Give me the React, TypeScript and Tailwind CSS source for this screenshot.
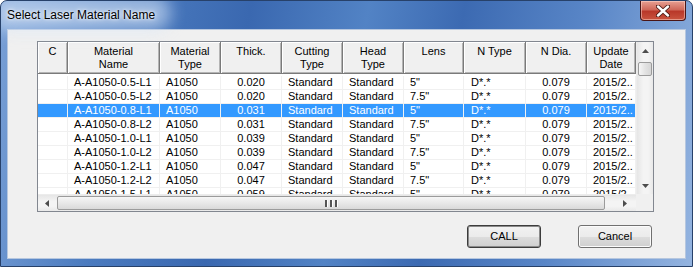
import React from 'react';

type Col = { title: string[]; w: string; body: string };

const cols: Col[] = [
  { title: ['C'], w: 'w-[30px]', body: 'text-left' },
  { title: ['Material', 'Name'], w: 'w-[92px]', body: 'text-left pl-[6px]' },
  { title: ['Material', 'Type'], w: 'w-[61px]', body: 'text-left pl-[6px]' },
  { title: ['Thick.'], w: 'w-[61px]', body: 'text-center' },
  { title: ['Cutting', 'Type'], w: 'w-[61px]', body: 'text-left pl-[6px]' },
  { title: ['Head', 'Type'], w: 'w-[61px]', body: 'text-left pl-[6px]' },
  { title: ['Lens'], w: 'w-[60px]', body: 'text-left pl-[6px]' },
  { title: ['N Type'], w: 'w-[62px]', body: 'text-left pl-[7px]' },
  { title: ['N Dia.'], w: 'w-[61px]', body: 'text-center' },
  { title: ['Update', 'Date'], w: 'w-[49px]', body: 'text-left pl-[6px]' },
];

const data: [string, string, string][] = [
  ['A-A1050-0.5-L1', '0.020', '5"'],
  ['A-A1050-0.5-L2', '0.020', '7.5"'],
  ['A-A1050-0.8-L1', '0.031', '5"'],
  ['A-A1050-0.8-L2', '0.031', '7.5"'],
  ['A-A1050-1.0-L1', '0.039', '5"'],
  ['A-A1050-1.0-L2', '0.039', '7.5"'],
  ['A-A1050-1.2-L1', '0.047', '5"'],
  ['A-A1050-1.2-L2', '0.047', '7.5"'],
  ['A-A1050-1.5-L1', '0.059', '5"'],
];

function Arrow({ dir }: { dir: 'up' | 'down' | 'left' | 'right' }) {
  const pts = {
    up: '0,4 7,4 3.5,0',
    down: '0,0 7,0 3.5,4',
    left: '4,0 4,7 0,3.5',
    right: '0,0 0,7 4,3.5',
  }[dir];
  const vert = dir === 'up' || dir === 'down';
  return (
    <svg width={vert ? 7 : 4} height={vert ? 4 : 7} viewBox={vert ? '0 0 7 4' : '0 0 4 7'}>
      <polygon points={pts} fill="#4d4d4d" />
    </svg>
  );
}

function VScroll() {
  return (
    <div className="w-[17px] h-full flex flex-col bg-[linear-gradient(90deg,#e6e6e6,#f4f4f4_40%,#f4f4f4_70%,#e9e9e9)] border-l border-[#ececec]">
      <div className="h-[17px] flex items-center justify-center">
        <Arrow dir="up" />
      </div>
      <div className="h-[14px] mx-[1px] mt-[3px] rounded-[2px] border border-[#9b9b9b] bg-[linear-gradient(90deg,#f6f6f6,#e3e3e3_50%,#d6d6d6)]" />
      <div className="flex-1" />
      <div className="h-[17px] flex items-center justify-center">
        <Arrow dir="down" />
      </div>
    </div>
  );
}

function HScroll() {
  return (
    <div className="w-[598px] h-full flex bg-[linear-gradient(180deg,#e6e6e6,#f4f4f4_40%,#f4f4f4_70%,#e9e9e9)] border-t border-[#ececec]">
      <div className="w-[17px] flex items-center justify-center">
        <Arrow dir="left" />
      </div>
      <div className="w-[548px] my-[1px] ml-[2px] rounded-[2px] border border-[#9b9b9b] bg-[linear-gradient(180deg,#f6f6f6,#e8e8e8_50%,#d9d9d9)] flex items-center justify-center gap-[2px]">
        <div className="w-[2px] h-[7px] bg-[#555] border-r border-white box-content" />
        <div className="w-[2px] h-[7px] bg-[#555] border-r border-white box-content" />
        <div className="w-[2px] h-[7px] bg-[#555] border-r border-white box-content" />
      </div>
      <div className="flex-1 flex items-center justify-end pr-[9px]">
        <Arrow dir="right" />
      </div>
    </div>
  );
}

function ListView() {
  return (
    <div className="w-[617px] h-[171px] border border-[#828790] bg-white flex flex-col">
      <div className="flex h-[152px]">
        <div className="w-[598px] overflow-hidden">
          <div className="flex h-[32px] bg-[#f0f0f0]">
            {cols.map((c, i) => (
              <div
                key={i}
                className={`${c.w} shrink-0 h-full border-r border-b border-[#7a7a7a] shadow-[inset_1px_1px_0_#ffffff,inset_-1px_-1px_0_#b4b4b4] pt-[3px] text-center leading-[13px] overflow-hidden whitespace-nowrap`}
              >
                {c.title.map((t, j) => (
                  <div key={j}>{t}</div>
                ))}
              </div>
            ))}
          </div>
          <div className="pt-[2px]">
            {data.map(([name, thick, lens], r) => {
              const sel = r === 2;
              const vals = ['', name, 'A1050', thick, 'Standard', 'Standard', lens, 'D*.*', '0.079', '2015/2..'];
              return (
                <div key={r} className={`flex h-[14px] ${sel ? 'bg-[#3399ff] text-white' : 'text-black'}`}>
                  {cols.map((c, i) => (
                    <div
                      key={i}
                      className={`${c.w} ${c.body} shrink-0 h-full border-r border-b border-[#f0f0f0] leading-[13px] overflow-hidden whitespace-nowrap`}
                    >
                      {vals[i]}
                    </div>
                  ))}
                </div>
              );
            })}
          </div>
        </div>
        <VScroll />
      </div>
      <div className="flex h-[17px]">
        <HScroll />
        <div className="w-[17px] bg-[#f0f0f0]" />
      </div>
    </div>
  );
}

function Button({ label, def }: { label: string; def?: boolean }) {
  return (
    <div
      className={`w-[74px] h-[23px] rounded-[3px] flex items-center justify-center bg-[linear-gradient(180deg,#f2f2f2,#ebebeb_50%,#dddddd_51%,#cfcfcf)] ${
        def ? 'border border-[#3c3c3c] shadow-[inset_0_0_0_1px_#8a8a8a]' : 'border border-[#707070] shadow-[inset_0_0_0_1px_#fbfbfb]'
      }`}
    >
      {label}
    </div>
  );
}

export default function App() {
  return (
    <div className="w-[693px] h-[267px] overflow-hidden rounded-t-[7px] border border-[#27416a] bg-[linear-gradient(100deg,#79a0d6_0%,#4b7bbf_18%,#3a68b0_34%,#5283c5_50%,#3c6ab2_63%,#5986c7_80%,#94b4e0_100%)] flex flex-col font-['Liberation_Sans',Arial,sans-serif] text-[11px] text-black">
      <div className="h-[28px] shrink-0 relative">
        <div className="absolute left-[-10px] top-[-6px] w-[180px] h-[36px] rounded-full bg-[#d8e6f8] opacity-60 blur-[8px]" />
        <div className="relative pl-[6px] pt-[7px] text-[12px] leading-[15px] text-black [text-shadow:0_0_6px_#ffffff,0_0_3px_#ffffff]">
          Select Laser Material Name
        </div>
        <div className="absolute right-[6px] top-0 w-[46px] h-[20px] rounded-b-[4px] border border-t-0 border-[#4a1515] bg-[linear-gradient(180deg,#e8a093,#d0695a_45%,#b9382a_55%,#c9543f)] shadow-[inset_0_0_0_1px_rgba(255,220,210,0.5)] flex items-center justify-center">
          <svg width="14" height="12" viewBox="0 0 14 12">
            <path d="M2 1.5 L12 10.5 M12 1.5 L2 10.5" stroke="#4a1a14" strokeWidth="4.2" strokeLinecap="round" />
            <path d="M2 1.5 L12 10.5 M12 1.5 L2 10.5" stroke="#ffffff" strokeWidth="2.4" strokeLinecap="round" />
          </svg>
        </div>
      </div>
      <div className="mx-[6px] mb-[7px] flex-1 border border-[#b6c7df] bg-[#f0f0f0] pl-[29px] pt-[11px] flex flex-col">
        <ListView />
        <div className="w-[617px] mt-[13px] flex justify-end gap-[37px] pr-[2px]">
          <Button label="CALL" def />
          <Button label="Cancel" />
        </div>
      </div>
    </div>
  );
}
